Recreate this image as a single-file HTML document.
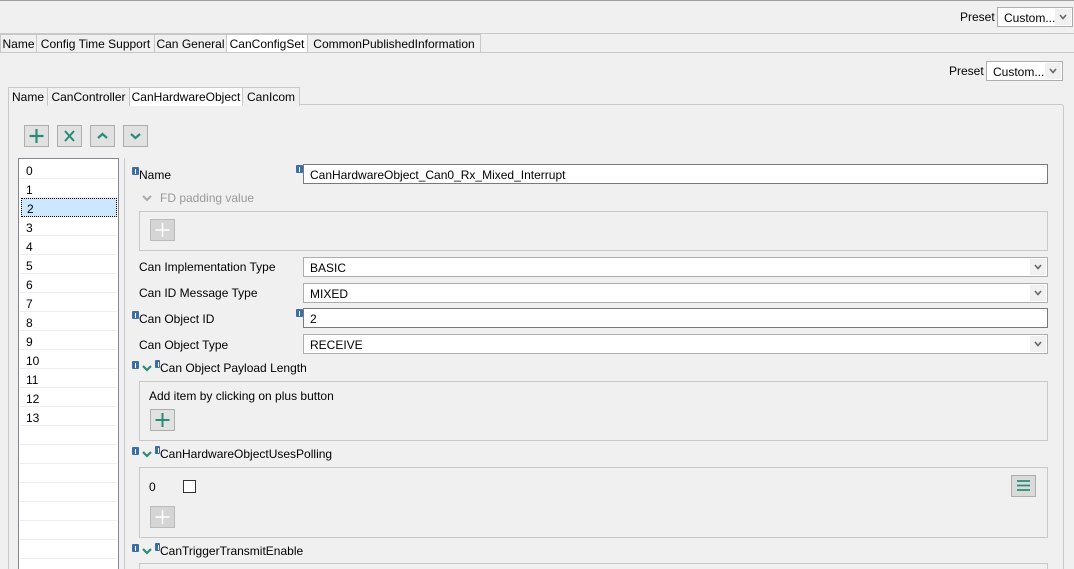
<!DOCTYPE html>
<html><head><style>
*{box-sizing:border-box;margin:0;padding:0}
html,body{width:1074px;height:569px;overflow:hidden}
body{background:#f0f0f0;font-family:"Liberation Sans",sans-serif;font-size:12px;color:#000;position:relative}
.a{position:absolute}
.tab{position:absolute;height:19px;border:1px solid #c8c8c8;border-bottom:none;background:#f0f0f0;padding:2px 0 0 0;text-align:center;white-space:nowrap}
.tab.sel{background:#fff}
.dd{position:absolute;background:#fff;border:1px solid #adadad;padding:3px 0 0 6px;height:20px}
.dd .ar{position:absolute;right:1px;top:1px;width:16px;height:16px;background:#f0f0f0}
.btn{position:absolute;width:25px;height:22px;background:#e1e1e1;border:1px solid #adadad}
.box{position:absolute;border:1px solid #c8c8c8;left:139px;width:909px}
.lbl{position:absolute;left:139px}
.inf{position:absolute;width:7px;height:8px;background:#3a6ea5;border-radius:1px}
.inf::after{content:"";position:absolute;left:3px;top:2px;width:1px;height:5px;background:#fff}
.row{position:absolute;left:20px;width:97px;height:19px;border-bottom:1px solid #eee;padding:4px 0 0 6px}
</style></head><body>
<svg width="0" height="0" style="position:absolute"><defs>
<symbol id="ar" viewBox="0 0 16 16"><path d="M5 6l3 3.5 3-3.5" stroke="#666" stroke-width="1.6" fill="none"/></symbol>
<symbol id="ch" viewBox="0 0 12 10"><path d="M2 3l4 4 4-4" stroke="#2a8c76" stroke-width="2.2" fill="none"/></symbol>
</defs></svg>
<div class="a" style="left:0;top:0;width:1074px;height:1px;background:#a0a0a0"></div>
<div class="a" style="left:960px;top:10px">Preset</div>
<div class="dd" style="left:997px;top:7px;width:76px">Custom...<svg class="ar" style="position:absolute;right:1px;top:1px;width:16px;height:16px;background:#f0f0f0"><use href="#ar"/></svg></div>
<div class="a" style="left:0;top:33px;width:1074px;height:1px;background:#c8c8c8"></div>
<div class="tab" style="left:0;top:34px;width:37px">Name</div>
<div class="tab" style="left:36px;top:34px;width:119px">Config Time Support</div>
<div class="tab" style="left:154px;top:34px;width:73px">Can General</div>
<div class="tab sel" style="left:226px;top:34px;width:82px">CanConfigSet</div>
<div class="tab" style="left:307px;top:34px;width:174px">CommonPublishedInformation</div>
<div class="a" style="left:0;top:52px;width:1074px;height:1px;background:#c8c8c8"></div>
<div class="a" style="left:949px;top:64px">Preset</div>
<div class="dd" style="left:986px;top:61px;width:77px">Custom...<svg style="position:absolute;right:1px;top:1px;width:16px;height:16px;background:#f0f0f0"><use href="#ar"/></svg></div>
<div class="a" style="left:8px;top:104px;width:1056px;height:470px;border:1px solid #c8c8c8;border-radius:3px 3px 0 0"></div>
<div class="tab" style="left:8px;top:87px;width:40px">Name</div>
<div class="tab" style="left:47px;top:87px;width:83px">CanController</div>
<div class="tab sel" style="left:129px;top:87px;width:114px">CanHardwareObject</div>
<div class="tab" style="left:242px;top:87px;width:58px">CanIcom</div>
<div class="btn" style="left:24px;top:125px"><svg width="23" height="20"><path d="M11.5 3v14M4.5 10h14" stroke="#2a8c76" stroke-width="2.2"/></svg></div>
<div class="btn" style="left:57px;top:125px"><svg width="23" height="20"><path d="M7 5l9 10M16 5l-9 10" stroke="#2a8c76" stroke-width="2"/></svg></div>
<div class="btn" style="left:90px;top:125px"><svg width="23" height="20"><path d="M7 12l4.5-4 4.5 4" stroke="#2a8c76" stroke-width="2.2" fill="none"/></svg></div>
<div class="btn" style="left:123px;top:125px"><svg width="23" height="20"><path d="M7 8l4.5 4 4.5-4" stroke="#2a8c76" stroke-width="2.2" fill="none"/></svg></div>
<div class="a" style="left:18px;top:158px;width:101px;height:420px;background:#fff;border:1px solid #828790"></div>
<div class="row" style="top:160px">0</div><div class="row" style="top:179px">1</div>
<div class="row" style="top:198px;background:#cce8ff;border:1px dotted #000;left:21px;width:96px;padding-left:5px;padding-top:3px">2</div>
<div class="row" style="top:217px">3</div><div class="row" style="top:236px">4</div><div class="row" style="top:255px">5</div><div class="row" style="top:274px">6</div><div class="row" style="top:293px">7</div><div class="row" style="top:312px">8</div><div class="row" style="top:331px">9</div><div class="row" style="top:350px">10</div><div class="row" style="top:369px">11</div><div class="row" style="top:388px">12</div><div class="row" style="top:407px">13</div>
<div class="row" style="top:426px"></div><div class="row" style="top:445px"></div><div class="row" style="top:464px"></div><div class="row" style="top:483px"></div><div class="row" style="top:502px"></div><div class="row" style="top:521px"></div><div class="row" style="top:540px"></div>
<div class="a" style="left:124px;top:158px;width:1px;height:420px;background:#c8c8c8"></div>
<div class="inf" style="left:132px;top:167px"></div><div class="lbl" style="top:168px">Name</div>
<div class="inf" style="left:296px;top:165px"></div>
<div class="dd" style="left:303px;top:164px;width:745px;border-color:#7a7a7a">CanHardwareObject_Can0_Rx_Mixed_Interrupt</div>
<svg class="a" style="left:141px;top:193px" width="12" height="10"><path d="M2 3l4 4 4-4" stroke="#aaa" stroke-width="2" fill="none"/></svg><div class="a" style="left:160px;top:191px;color:#999">FD padding value</div>
<div class="box" style="top:211px;height:40px"></div>
<div class="btn" style="left:150px;top:219px;background:#d5d5d5;border-color:#bbb"><svg width="23" height="20"><path d="M11.5 3v14M4.5 10h14" stroke="#fff" stroke-width="1.5"/></svg></div>
<div class="lbl" style="top:260px">Can Implementation Type</div>
<div class="dd" style="left:303px;top:257px;width:745px">BASIC<svg style="position:absolute;right:1px;top:1px;width:16px;height:16px;background:#f0f0f0"><use href="#ar"/></svg></div>
<div class="lbl" style="top:286px">Can ID Message Type</div>
<div class="dd" style="left:303px;top:283px;width:745px">MIXED<svg style="position:absolute;right:1px;top:1px;width:16px;height:16px;background:#f0f0f0"><use href="#ar"/></svg></div>
<div class="inf" style="left:132px;top:311px"></div><div class="lbl" style="top:312px">Can Object ID</div>
<div class="inf" style="left:296px;top:309px"></div>
<div class="dd" style="left:303px;top:308px;width:745px;border-color:#7a7a7a">2</div>
<div class="lbl" style="top:338px">Can Object Type</div>
<div class="dd" style="left:303px;top:334px;width:745px">RECEIVE<svg style="position:absolute;right:1px;top:1px;width:16px;height:16px;background:#f0f0f0"><use href="#ar"/></svg></div>
<div class="inf" style="left:132px;top:361px"></div><svg class="a" style="left:141px;top:363px" width="12" height="10"><use href="#ch"/></svg><div class="inf" style="left:155px;top:360px;width:5px"></div><div class="a" style="left:160px;top:361px">Can Object Payload Length</div>
<div class="box" style="top:381px;height:60px"></div>
<div class="a" style="left:149px;top:389px">Add item by clicking on plus button</div>
<div class="btn" style="left:150px;top:409px"><svg width="23" height="20"><path d="M11.5 3v14M4.5 10h14" stroke="#2a8c76" stroke-width="2"/></svg></div>
<div class="inf" style="left:132px;top:447px"></div><svg class="a" style="left:141px;top:449px" width="12" height="10"><use href="#ch"/></svg><div class="inf" style="left:155px;top:446px;width:5px"></div><div class="a" style="left:160px;top:447px">CanHardwareObjectUsesPolling</div>
<div class="box" style="top:467px;height:71px"></div>
<div class="a" style="left:149px;top:480px">0</div>
<div class="a" style="left:183px;top:480px;width:13px;height:13px;background:#fff;border:1px solid #333"></div>
<div class="btn" style="left:1011px;top:475px;background:#dadada"><svg width="23" height="20"><path d="M5 5h13M5 9.5h13M5 14h13" stroke="#2a8c76" stroke-width="1.8"/></svg></div>
<div class="btn" style="left:150px;top:506px;background:#d5d5d5;border-color:#bbb"><svg width="23" height="20"><path d="M11.5 3v14M4.5 10h14" stroke="#fff" stroke-width="1.5"/></svg></div>
<div class="inf" style="left:132px;top:544px"></div><svg class="a" style="left:141px;top:546px" width="12" height="10"><use href="#ch"/></svg><div class="inf" style="left:155px;top:543px;width:5px"></div><div class="a" style="left:160px;top:544px">CanTriggerTransmitEnable</div>
<div class="box" style="top:563px;height:20px"></div>
</body></html>
